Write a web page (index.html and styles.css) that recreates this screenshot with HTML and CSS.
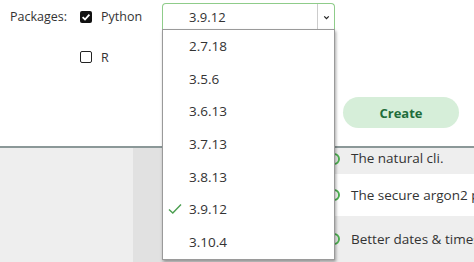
FILE: index.html
```html
<!DOCTYPE html>
<html lang="en">
<head>
    <meta charset="UTF-8">
    <meta name="viewport" content="width=device-width, initial-scale=1.0">
    <title>Packages</title>
    <link rel="stylesheet" href="styles.css">
</head>
<body>
    <div class="page">
        <form class="form">
            <span class="form-label">Packages:</span>
            <label class="check">
                <span class="box checked">
                    <svg viewBox="0 0 12 12" width="12" height="12"><path d="M2.6 6.2 L5 8.5 L9.4 3.6" fill="none" stroke="#fff" stroke-width="1.8"/></svg>
                </span>
                Python
            </label>
            <div class="select">
                <span class="select-value">3.9.12</span>
                <span class="select-arrow">
                    <svg viewBox="0 0 10 10" width="9" height="9"><path d="M2.5 3.8 L5 6.3 L7.5 3.8" fill="none" stroke="#222" stroke-width="1.4"/></svg>
                </span>
            </div>
            <label class="check check-r">
                <span class="box"></span>
                R
            </label>
            <button type="button" class="btn-create">Create</button>
        </form>

        <div class="table">
            <div class="col-side"></div>
            <div class="col-mid"></div>
            <div class="rows">
                <div class="row row-short"><span class="dot"></span>The natural cli.</div>
                <div class="row row-alt"><span class="dot"></span>The secure argon2 password hashing</div>
                <div class="row"><span class="dot"></span>Better dates &amp; times for Python</div>
            </div>
        </div>

        <!-- lista desplegable del select -->
        <ul class="dropdown">
            <li>2.7.18</li>
            <li>3.5.6</li>
            <li>3.6.13</li>
            <li>3.7.13</li>
            <li>3.8.13</li>
            <li class="selected">
                <svg class="tick" viewBox="0 0 14 12" width="14" height="12"><path d="M1 6.5 L4.8 10 L13 1.5" fill="none" stroke="#4a9e4f" stroke-width="1.4"/></svg>
                3.9.12
            </li>
            <li>3.10.4</li>
        </ul>
    </div>
</body>
</html>
```

FILE: styles.css
```css
/* General */
body {
    margin: 0;
    font-family: 'Open Sans', 'Noto Sans', sans-serif;
    color: #333;
    background: #fff;
}

.page {
    position: relative;
    width: 474px;
    height: 262px;
    overflow: hidden;
}

/* Form */
.form {
    display: grid;
    grid-template-columns: 70px 82px 173px auto;
    grid-template-rows: 27px 27px auto;
    height: 143px;
    padding: 3px 0 0 10px;
    border-bottom: 2px solid #8b9898;
    font-size: 12.5px;
}

.form-label {
    grid-column: 1;
    grid-row: 1;
    align-self: center;
}

.check {
    display: flex;
    align-items: center;
    gap: 9px;
    font-size: 12.5px;
}

.check-r {
    grid-column: 2;
    grid-row: 2;
    margin-top: 27px;
}

.box {
    box-sizing: border-box;
    width: 12px;
    height: 12px;
    border: 1.5px solid #222;
    border-radius: 2px;
    display: flex;
}

.box.checked {
    background: #111;
    border: none;
}

.select {
    grid-column: 3;
    grid-row: 1;
    display: flex;
    align-items: stretch;
    border: 1px solid #8fcc8a;
    border-bottom: none;
    border-radius: 4px 4px 0 0;
}

.select-value {
    flex: 1;
    padding-left: 26px;
    display: flex;
    align-items: center;
    font-size: 13px;
}

.select-arrow {
    width: 16px;
    border-left: 1px solid #ccc;
    display: flex;
    align-items: center;
    justify-content: center;
}

.btn-create {
    grid-column: 4;
    grid-row: 3;
    align-self: start;
    margin: 40px 0 0 8px;
    width: 116px;
    height: 31px;
    border: none;
    border-radius: 16px;
    background: #d6eed9;
    color: #1f6d3b;
    font-family: inherit;
    font-weight: bold;
    font-size: 13px;
}

/* Table */
.table {
    display: flex;
    height: 115px;
}

.col-side {
    flex: 0 0 133px;
    background: #eeeeee;
}

.col-mid {
    flex: 0 0 187px;
    background: #e1e1e1;
}

.rows {
    flex: 1;
    min-width: 0;
    overflow: hidden;
    font-size: 13.5px;
}

.row {
    display: flex;
    align-items: center;
    gap: 11px;
    height: 46px;
    padding-left: 8px;
    white-space: nowrap;
    background: #eeeeee;
}

.row-short {
    height: 26px;
    align-items: flex-start;
    padding-top: 1px;
    box-sizing: border-box;
}

.row-short .dot {
    margin-top: 4px;
}

.row-alt {
    height: 42px;
    background: #fff;
}

.dot {
    box-sizing: border-box;
    width: 12px;
    height: 12px;
    border: 2px solid #4caf50;
    border-radius: 50%;
    flex-shrink: 0;
}

/* Dropdown */
.dropdown {
    position: absolute;
    left: 162px;
    top: 29px;
    width: 171px;
    margin: 0;
    padding: 0;
    list-style: none;
    background: #fff;
    border: 1px solid #9a9a9a;
    box-shadow: 1px 2px 3px rgba(0, 0, 0, 0.35);
    font-size: 13.5px;
}

.dropdown li {
    position: relative;
    height: 32.7px;
    line-height: 32.7px;
    padding-left: 26px;
}

.tick {
    position: absolute;
    left: 5px;
    top: 10px;
}
```
